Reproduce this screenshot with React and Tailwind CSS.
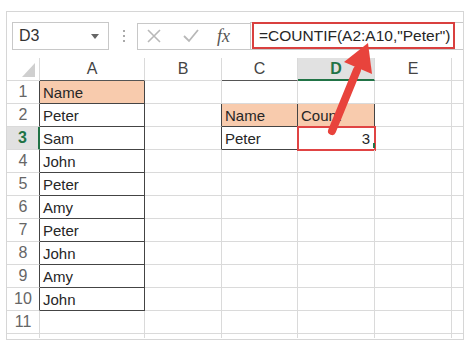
import React from "react";

const F = { fontFamily: '"Liberation Sans", Arial, sans-serif' };

const colA = ["Name", "Peter", "Sam", "John", "Peter", "Amy", "Peter", "John", "Amy", "John", ""];

function Cell({ w, className = "", children }) {
  return (
    <div className={`h-full shrink-0 border-r border-b ${w} ${className}`}>{children}</div>
  );
}

export default function App() {
  const rows = Array.from({ length: 11 }, (_, i) => i + 1);
  return (
    <div className="w-[474px] h-[350px] bg-white pt-[11px] pl-[6px] relative overflow-hidden" style={F}>
      <div className="w-[458px] h-[329px] border border-[#d6d6d6] flex flex-col">
        {/* toolbar */}
        <div className="flex items-center mt-[10px] ml-[5px] h-[28px]">
          <div className="w-[97px] h-[28px] border border-[#c8c8c8] flex items-center justify-between pl-[6px] pr-[9px]">
            <span className="text-[16px] text-[#333]">D3</span>
            <svg width="8" height="5" viewBox="0 0 8 5"><path d="M0 0 L8 0 L4 5Z" fill="#666" /></svg>
          </div>
          <div className="ml-[13px] w-[4px] flex flex-col items-center gap-[3px]">
            <div className="w-[2px] h-[2px] bg-[#aaa]" />
            <div className="w-[2px] h-[2px] bg-[#aaa]" />
            <div className="w-[2px] h-[2px] bg-[#aaa]" />
          </div>
          <div className="ml-[11px] w-[113px] h-[27px] border border-[#c8c8c8] border-r-0 flex items-center">
            <svg className="ml-[9px]" width="14" height="14" viewBox="0 0 14 14">
              <path d="M1 1 L13 13 M13 1 L1 13" stroke="#b8b8b8" strokeWidth="1.6" fill="none" />
            </svg>
            <svg className="ml-[22px]" width="16" height="14" viewBox="0 0 16 14">
              <path d="M1 7 L6 12 L15 1" stroke="#b8b8b8" strokeWidth="1.8" fill="none" />
            </svg>
            <span className="ml-[18px] text-[18px] italic text-[#555]" style={{ fontFamily: '"Liberation Serif", serif' }}>fx</span>
          </div>
          <div className="w-[213px] h-[28px] border border-[#c8c8c8] border-r-0 pl-[1px] pt-0">
            <div className="w-[203px] h-[27px] border-2 border-[#d9403f] flex items-center pl-[5px] -mt-[1px]">
              <span className="text-[15.5px] text-[#262626] whitespace-nowrap">=COUNTIF(A2:A10,"Peter")</span>
            </div>
          </div>
        </div>

        {/* grid */}
        <div className="mt-[8px] flex flex-col text-[15px] text-[#262626]">
          {/* header row */}
          <div className="flex h-[23px] border-[#dadada]">
            <Cell w="w-[33px]" className="border-[#dadada] relative">
              <svg className="absolute right-[4px] bottom-[3px]" width="13" height="14" viewBox="0 0 13 14">
                <path d="M13 0 L13 14 L0 14Z" fill="#cfcfcf" />
              </svg>
            </Cell>
            <Cell w="w-[105px]" className="border-r-[#dadada] border-b-[#555] flex items-center justify-center text-[16px] text-[#444]">A</Cell>
            <Cell w="w-[77px]" className="border-[#dadada] flex items-center justify-center text-[16px] text-[#444]">B</Cell>
            <Cell w="w-[76px]" className="border-r-[#dadada] border-b-[#555] flex items-center justify-center text-[16px] text-[#444]">C</Cell>
            <Cell w="w-[77px]" className="border-r-[#dadada] border-b-2 border-b-[#217346] bg-[#e1e1e1] flex items-center justify-center text-[16px] font-bold text-[#217346]">D</Cell>
            <Cell w="w-[77px]" className="border-[#dadada] flex items-center justify-center text-[16px] text-[#444]">E</Cell>
            <div className="w-[11px] h-full border-b border-[#dadada]" />
          </div>
          {rows.map((r) => {
            const isSel = r === 3;
            const inA = r <= 10;
            return (
              <div key={r} className="flex h-[23px]">
                <Cell
                  w="w-[33px]"
                  className={`border-b-[#dadada] flex items-center justify-center text-[16px] ${
                    isSel
                      ? "bg-[#e1e1e1] text-[#217346] font-bold border-r-2 border-r-[#217346]"
                      : inA
                      ? "border-r-[#444] text-[#666]"
                      : "border-r-[#dadada] text-[#666]"
                  }`}
                >
                  {r}
                </Cell>
                <Cell
                  w="w-[105px]"
                  className={`${inA ? "border-[#444]" : "border-[#dadada]"} ${r === 1 ? "bg-[#f8cbad]" : ""} pl-[3px] pt-[2px] leading-[20px]`}
                >
                  {colA[r - 1]}
                </Cell>
                <Cell
                  w="w-[77px]"
                  className={`border-b-[#dadada] ${r === 2 || r === 3 ? "border-r-[#444]" : "border-r-[#dadada]"}`}
                />
                <Cell
                  w="w-[76px]"
                  className={`${r === 2 || r === 3 ? "border-[#444]" : "border-[#dadada]"} ${r === 2 ? "bg-[#f8cbad]" : ""} pl-[3px] pt-[2px] leading-[20px]`}
                >
                  {r === 2 ? "Name" : r === 3 ? "Peter" : ""}
                </Cell>
                <Cell
                  w="w-[77px]"
                  className={`${r === 2 || r === 3 ? "border-[#444]" : "border-[#dadada]"} ${r === 2 ? "bg-[#f8cbad]" : ""} relative pl-[3px] pt-[2px] leading-[20px] ${r === 3 ? "text-right pr-[4px]" : ""}`}
                >
                  {r === 2 ? "Count" : r === 3 ? "3" : ""}
                  {r === 3 && (
                    <>
                      <div className="absolute -left-[1px] -top-[1px] -right-[2px] -bottom-[2px] border-2 border-[#e04444]" />
                      <div className="absolute right-[-1px] bottom-[1px] w-[2px] h-[5px] bg-[#217346]" />
                    </>
                  )}
                </Cell>
                <Cell w="w-[77px]" className="border-[#dadada]" />
                <div className="w-[11px] h-full border-b border-[#dadada]" />
              </div>
            );
          })}
          <div className="flex h-[4px]">
            <div className="w-[33px] h-full border-r border-[#dadada]" />
            <div className="w-[105px] h-full border-r border-[#dadada]" />
            <div className="w-[77px] h-full border-r border-[#dadada]" />
            <div className="w-[76px] h-full border-r border-[#dadada]" />
            <div className="w-[77px] h-full border-r border-[#dadada]" />
            <div className="w-[77px] h-full border-r border-[#dadada]" />
          </div>
        </div>
      </div>

      {/* arrow overlay */}
      <svg className="absolute left-0 top-0 pointer-events-none" width="474" height="350" viewBox="0 0 474 350">
        <line x1="332" y1="131" x2="357" y2="70" stroke="#e8433c" strokeWidth="8" strokeLinecap="round" />
        <polygon points="344,62 372,74 368,43" fill="#e8433c" />
      </svg>
    </div>
  );
}
